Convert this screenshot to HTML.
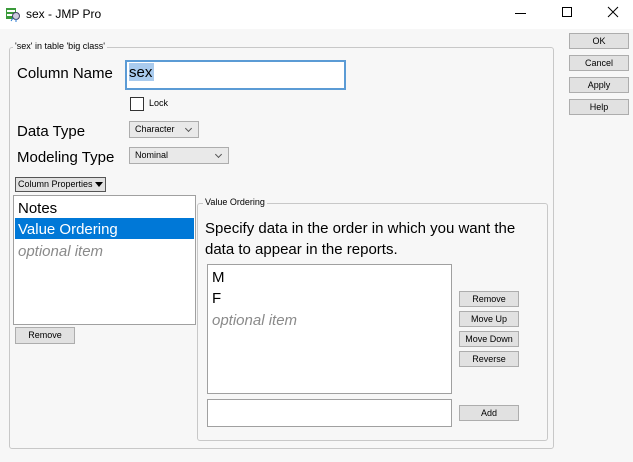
<!DOCTYPE html>
<html><head><meta charset="utf-8"><style>
*{box-sizing:border-box;margin:0;padding:0}
body{width:633px;height:462px;background:#f7f7f7;font-family:"Liberation Sans",sans-serif;position:relative;overflow:hidden;color:#000}
.a{position:absolute}
.btn{position:absolute;background:#e1e1e1;border:1px solid #adadad;font-size:9px;text-align:center;line-height:14px}
.lbl{position:absolute;font-size:15px;white-space:nowrap}
.grp{position:absolute;border:1px solid #c8c8c8;border-radius:3px}
.leg{position:absolute;background:#f7f7f7;font-size:9px;padding:0 2px}
.list{position:absolute;background:#fff;border:1px solid #a0a0a0}
.it{position:absolute;font-size:15px;white-space:nowrap}
.opt{color:#8a8a8a;font-style:italic}
.combo{position:absolute;background:#e9e9e9;border:1px solid #adadad;font-size:9px;padding-left:5px;line-height:15px}
.combo:after{content:"";position:absolute;right:7px;top:4px;width:4px;height:4px;border-right:1px solid #555;border-bottom:1px solid #555;transform:rotate(45deg)}
</style></head><body>
<div class="a" style="left:0;top:0;width:633px;height:29px;background:#fff"></div>
<svg class="a" style="left:5px;top:6px" width="16" height="16"><rect x="1" y="2" width="10" height="11" fill="#3a9a3a"/><rect x="2" y="4" width="8" height="2" fill="#fff"/><rect x="2" y="8" width="8" height="2" fill="#fff"/><circle cx="11" cy="10" r="3.5" fill="#ccd" stroke="#446" stroke-width="1"/><path d="M11 13v3M8 12l-2 3" stroke="#2a7ad0"/></svg>
<div class="a" style="left:26px;top:7px;font-size:12px">sex - JMP Pro</div>
<div class="a" style="left:515px;top:13px;width:11px;height:1px;background:#000"></div>
<div class="a" style="left:562px;top:7px;width:10px;height:10px;border:1px solid #000"></div>
<svg class="a" style="left:607px;top:6px" width="12" height="12"><path d="M1 1L11 11M11 1L1 11" stroke="#000" stroke-width="1"/></svg>

<div class="grp" style="left:9px;top:47px;width:545px;height:402px"></div>
<div class="leg" style="left:13px;top:41px">'sex' in table 'big class'</div>

<div class="lbl" style="left:17px;top:65px">Column Name</div>
<div class="a" style="left:125px;top:60px;width:221px;height:30px;border:2px solid #5b9bd5;background:#fff"></div>
<div class="a" style="left:129px;top:63px;width:25px;height:18px;background:#a9cbee"></div>
<div class="lbl" style="left:129px;top:64px">sex</div>
<div class="a" style="left:130px;top:97px;width:14px;height:14px;border:1px solid #333;background:#fff"></div>
<div class="a" style="left:149px;top:98px;font-size:9px">Lock</div>

<div class="lbl" style="left:17px;top:123px">Data Type</div>
<div class="combo" style="left:129px;top:121px;width:70px;height:17px">Character</div>
<div class="lbl" style="left:17px;top:149px">Modeling Type</div>
<div class="combo" style="left:129px;top:147px;width:100px;height:17px">Nominal</div>

<div class="a" style="left:15px;top:177px;width:91px;height:15px;background:#e1e1e1;border:1px solid #555;font-size:9px;padding-left:2px;line-height:13px">Column Properties</div>
<div class="a" style="left:95px;top:182px;width:0;height:0;border-left:4px solid transparent;border-right:4px solid transparent;border-top:5px solid #000"></div>

<div class="list" style="left:13px;top:195px;width:183px;height:130px"></div>
<div class="it" style="left:18px;top:200px">Notes</div>
<div class="a" style="left:15px;top:218px;width:179px;height:21px;background:#0078d7"></div>
<div class="it" style="left:18px;top:221px;color:#fff">Value Ordering</div>
<div class="it opt" style="left:18px;top:243px">optional item</div>
<div class="btn" style="left:15px;top:327px;width:60px;height:17px">Remove</div>

<div class="grp" style="left:197px;top:203px;width:351px;height:238px"></div>
<div class="leg" style="left:203px;top:197px">Value Ordering</div>
<div class="lbl" style="left:205px;top:220px">Specify data in the order in which you want the</div>
<div class="lbl" style="left:205px;top:241px">data to appear in the reports.</div>

<div class="list" style="left:207px;top:264px;width:245px;height:130px"></div>
<div class="it" style="left:212px;top:269px">M</div>
<div class="it" style="left:212px;top:290px">F</div>
<div class="it opt" style="left:212px;top:312px">optional item</div>
<div class="btn" style="left:459px;top:291px;width:60px;height:16px">Remove</div>
<div class="btn" style="left:459px;top:311px;width:60px;height:16px">Move Up</div>
<div class="btn" style="left:459px;top:331px;width:60px;height:16px">Move Down</div>
<div class="btn" style="left:459px;top:351px;width:60px;height:16px">Reverse</div>
<div class="list" style="left:207px;top:399px;width:245px;height:28px"></div>
<div class="btn" style="left:459px;top:405px;width:60px;height:16px">Add</div>

<div class="btn" style="left:569px;top:33px;width:60px;height:16px">OK</div>
<div class="btn" style="left:569px;top:55px;width:60px;height:16px">Cancel</div>
<div class="btn" style="left:569px;top:77px;width:60px;height:16px">Apply</div>
<div class="btn" style="left:569px;top:99px;width:60px;height:16px">Help</div>
</body></html>
